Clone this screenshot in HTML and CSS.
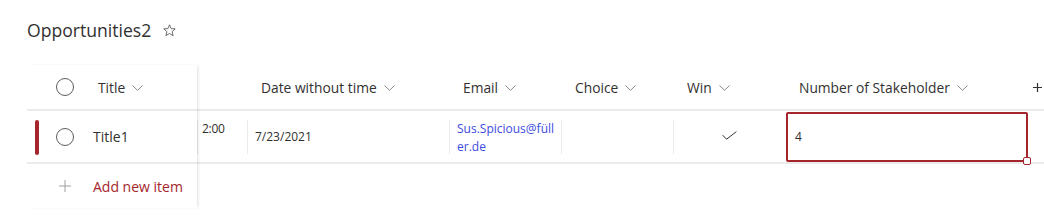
FILE: index.html
```html
<!DOCTYPE html>
<html lang="en">
<head>
<meta charset="utf-8">
<title>Opportunities2</title>
<link rel="stylesheet" href="styles.css">
</head>
<body>
<div class="page">
  <div class="list-title">
    <h1 class="title-text">Opportunities2</h1>
    <svg class="star" width="13" height="13" viewBox="0 0 13 13"><path d="M6.5 0.8 L8.1 4.6 L12.2 4.9 L9.1 7.6 L10.1 11.7 L6.5 9.5 L2.9 11.7 L3.9 7.6 L0.8 4.9 L4.9 4.6 Z" fill="none" stroke="#605e5c" stroke-width="0.9" stroke-linejoin="round"/></svg>
  </div>

  <div class="grid">
    <div class="frozen">
      <div class="row head-row">
        <span class="check"></span>
        <span class="head-label title-head">Title<svg class="chev" width="11" height="6" viewBox="0 0 11 6"><path d="M0.5 0.5 L5.5 5.3 L10.5 0.5" fill="none" stroke="#8a8886" stroke-width="1"/></svg></span>
      </div>
      <div class="row data-row">
        <span class="marker"></span>
        <span class="check"></span>
        <span class="title-cell">Title1</span>
      </div>
      <div class="row add-row">
        <svg class="plus" width="12" height="12" viewBox="0 0 12 12"><path d="M6 0 V12 M0 6 H12" stroke="#a19f9d" stroke-width="1"/></svg>
        <span class="add-text">Add new item</span>
      </div>
    </div>

    <div class="scroll">
      <div class="row head-row">
        <div class="hcell w-part"></div>
        <div class="hcell w-date"><span class="head-label">Date without time<svg class="chev" width="11" height="6" viewBox="0 0 11 6"><path d="M0.5 0.5 L5.5 5.3 L10.5 0.5" fill="none" stroke="#8a8886" stroke-width="1"/></svg></span></div>
        <div class="hcell w-std"><span class="head-label">Email<svg class="chev" width="11" height="6" viewBox="0 0 11 6"><path d="M0.5 0.5 L5.5 5.3 L10.5 0.5" fill="none" stroke="#8a8886" stroke-width="1"/></svg></span></div>
        <div class="hcell w-std"><span class="head-label">Choice<svg class="chev" width="11" height="6" viewBox="0 0 11 6"><path d="M0.5 0.5 L5.5 5.3 L10.5 0.5" fill="none" stroke="#8a8886" stroke-width="1"/></svg></span></div>
        <div class="hcell w-std"><span class="head-label">Win<svg class="chev" width="11" height="6" viewBox="0 0 11 6"><path d="M0.5 0.5 L5.5 5.3 L10.5 0.5" fill="none" stroke="#8a8886" stroke-width="1"/></svg></span></div>
        <div class="hcell w-num"><span class="head-label">Number of Stakeholder<svg class="chev" width="11" height="6" viewBox="0 0 11 6"><path d="M0.5 0.5 L5.5 5.3 L10.5 0.5" fill="none" stroke="#8a8886" stroke-width="1"/></svg></span></div>
        <div class="hcell w-add"><svg width="9" height="9" viewBox="0 0 9 9"><path d="M4.5 0 V9 M0 4.5 H9" stroke="#323130" stroke-width="1.2"/></svg></div>
      </div>
      <div class="row data-row">
        <div class="dcell w-part top"><span class="sep"></span><span class="cell-text part-text">2:00</span></div>
        <div class="dcell w-date"><span class="sep"></span><span class="cell-text">7/23/2021</span></div>
        <div class="dcell w-std top"><span class="sep"></span><span class="cell-text email">Sus.Spicious@füller.de</span></div>
        <div class="dcell w-std"><span class="sep"></span></div>
        <div class="dcell w-std center"><span class="sep"></span><svg width="15" height="9" viewBox="0 0 15 9"><path d="M0.6 4.2 L4.6 8.2 L14.4 0.6" fill="none" stroke="#323130" stroke-width="1"/></svg></div>
        <div class="dcell w-num">
          <div class="edit-box"><span class="cell-text num">4</span><span class="handle"></span></div>
        </div>
        <div class="dcell w-add"></div>
      </div>
      <div class="row add-row"></div>
    </div>
  </div>
</div>
</body>
</html>
```

FILE: styles.css
```css
* { box-sizing: border-box; }

html, body {
  margin: 0;
  padding: 0;
  background: #ffffff;
}

body {
  font-family: "Open Sans", "Noto Sans", sans-serif;
  color: #323130;
  width: 1044px;
  height: 224px;
  overflow: hidden;
}

.page {
  padding-top: 18px;
}

.list-title {
  display: flex;
  align-items: center;
  padding-left: 27px;
  height: 24px;
  gap: 12px;
}

.title-text {
  margin: 0;
  font-size: 17.6px;
  font-weight: 400;
  line-height: 24px;
  color: #323130;
}

.star {
  margin-top: 1px;
}

.grid {
  display: flex;
  margin-top: 23px;
  margin-left: 27px;
}

.frozen {
  width: 170px;
  flex: none;
  position: relative;
  z-index: 2;
  background: #fff;
  box-shadow: 2px 0 3px -1px rgba(0, 0, 0, 0.13);
}

.scroll {
  flex: 1;
  min-width: 0;
}

.row {
  display: flex;
  align-items: center;
}

.head-row {
  height: 46px;
  border-bottom: 2px solid #edebe9;
}

.data-row {
  height: 53px;
  border-bottom: 2px solid #edebe9;
  align-items: stretch;
}

.frozen .data-row {
  align-items: center;
}

.add-row {
  height: 44px;
}

.check {
  width: 18px;
  height: 18px;
  border: 1px solid #605e5c;
  border-radius: 50%;
  flex: none;
}

.frozen .head-row .check {
  margin-left: 29px;
}

.title-head {
  margin-left: 24px;
}

.head-label {
  display: inline-flex;
  align-items: center;
  font-size: 13.8px;
  color: #323130;
  white-space: nowrap;
  gap: 7px;
}

.chev {
  margin-top: 1px;
}

.marker {
  width: 4px;
  height: 35px;
  border-radius: 2px;
  background: #a4262c;
  margin-left: 8px;
  margin-top: 1px;
}

.frozen .data-row .check {
  margin-left: 17px;
}

.title-cell {
  margin-left: 19px;
  font-size: 14px;
  color: #323130;
}

.plus {
  margin-left: 32px;
}

.add-text {
  margin-left: 22px;
  font-size: 14px;
  color: #a4262c;
}

.hcell {
  height: 100%;
  display: flex;
  align-items: center;
  padding-left: 14px;
  flex: none;
}

.dcell {
  position: relative;
  display: flex;
  align-items: center;
  flex: none;
  padding-left: 8px;
}

.dcell.top {
  align-items: flex-start;
  padding-top: 9px;
}

.dcell.center {
  justify-content: center;
  padding-left: 0;
  padding-bottom: 2px;
}

.sep {
  position: absolute;
  left: 0;
  top: 9px;
  bottom: 8px;
  width: 1px;
  background: #edebe9;
}

.w-part { width: 50px; }
.w-date { width: 202px; }
.w-std { width: 112px; }
.w-num { width: 244px; }
.w-add { width: 15px; padding-left: 4px; }

.w-part.dcell { padding-left: 5px; }
.w-part.hcell { padding-left: 0; }

.cell-text {
  font-size: 12px;
  line-height: 18px;
  color: #323130;
}

.part-text {
  letter-spacing: -0.3px;
}

.email {
  color: #3c4be0;
  width: 99px;
  word-break: break-all;
}

.w-num.dcell {
  padding: 1px 1px 0 1px;
  align-items: stretch;
}

.edit-box {
  position: relative;
  flex: 1;
  border: 2px solid #a4262c;
  border-radius: 2px;
  display: flex;
  align-items: center;
  padding-left: 7px;
}

.handle {
  position: absolute;
  right: -5px;
  bottom: -5px;
  width: 8px;
  height: 8px;
  border: 1.5px solid #a4262c;
  border-radius: 2px;
  background: #fff;
}
```
